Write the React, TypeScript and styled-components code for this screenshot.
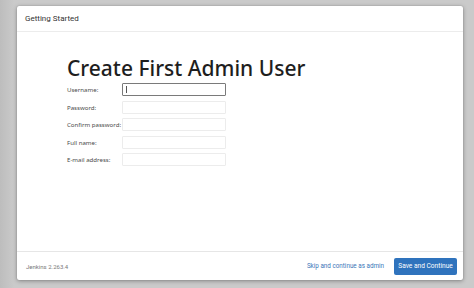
import React from 'react'
import styled, { createGlobalStyle } from 'styled-components'

const GlobalStyle = createGlobalStyle`
  html, body {
    margin: 0;
    padding: 0;
    background: #c9c9c9;
  }
  body {
    font-family: Roboto, 'Liberation Sans', Arial, sans-serif;
  }
`

const Page = styled.div`
  width: 474px;
  height: 288px;
  box-sizing: border-box;
  padding: 6px 11px 8px 17px;
  background: linear-gradient(90deg, #bdbdbd 0%, #cacaca 3%, #cacaca 100%);
`

const Dialog = styled.div`
  height: 100%;
  display: flex;
  flex-direction: column;
  background: #fff;
  border-radius: 2px;
  box-shadow: 0 1px 4px rgba(0, 0, 0, 0.35), 0 0 1px rgba(0, 0, 0, 0.3);
`

const Header = styled.div`
  height: 25px;
  display: flex;
  align-items: center;
  padding-left: 8px;
  border-bottom: 1px solid #ececec;
  font-size: 8px;
  color: #333;
`

const Body = styled.div`
  flex: 1;
  padding: 24px 0 0 50px;
`

const Title = styled.h1`
  margin: 0 0 3px;
  font-family: 'Noto Sans', 'Open Sans', sans-serif;
  font-weight: 500;
  font-size: 21px;
  line-height: 24px;
  color: #1e1e1e;
  white-space: nowrap;
`

const Form = styled.div`
  display: grid;
  grid-template-columns: 55px 104px;
  row-gap: 4.6px;
  align-items: center;
`

const Label = styled.label`
  font-family: 'Noto Sans', 'Open Sans', sans-serif;
  font-size: 6.1px;
  color: #4a4a4a;
  white-space: nowrap;
`

const Input = styled.input`
  box-sizing: border-box;
  width: 104px;
  height: 13px;
  margin: 0;
  padding: 0 3px;
  font-size: 7px;
  border: 1px solid #ececec;
  border-radius: 1px;
  background: #fff;
  outline: none;
`

const Caret = styled.span`
  display: block;
  width: 1px;
  height: 7px;
  margin: 2px 0 0 3px;
  background: #555;
`

const FocusedBox = styled.div`
  box-sizing: border-box;
  width: 104px;
  height: 13px;
  border: 1px solid #7a7a7a;
  border-radius: 1px;
`

const Footer = styled.div`
  height: 28px;
  display: flex;
  align-items: center;
  padding: 0 6px 0 9px;
  border-top: 1px solid #e6e6e6;
`

const Version = styled.span`
  flex: 1;
  font-size: 6px;
  color: #7a7a7a;
`

const SkipLink = styled.a`
  font-size: 6.3px;
  color: #3b76b8;
  margin-right: 10px;
  text-decoration: none;
`

const SaveButton = styled.button`
  height: 17px;
  width: 63px;
  padding: 0;
  border: none;
  border-radius: 2px;
  background: #2f73bd;
  color: #fff;
  font-family: Roboto, 'Liberation Sans', Arial, sans-serif;
  font-size: 6.6px;
`

const fields = ['Password:', 'Confirm password:', 'Full name:', 'E-mail address:']

export default function App() {
  return (
    <>
      <GlobalStyle />
      <Page>
        <Dialog>
          <Header>Getting Started</Header>
          <Body>
            <Title>Create First Admin User</Title>
            <Form>
              <Label>Username:</Label>
              <FocusedBox>
                <Caret />
              </FocusedBox>
              {fields.map((f) => (
                <React.Fragment key={f}>
                  <Label>{f}</Label>
                  <Input type="text" />
                </React.Fragment>
              ))}
            </Form>
          </Body>
          <Footer>
            <Version>Jenkins 2.263.4</Version>
            <SkipLink href="#">Skip and continue as admin</SkipLink>
            <SaveButton>Save and Continue</SaveButton>
          </Footer>
        </Dialog>
      </Page>
    </>
  )
}
